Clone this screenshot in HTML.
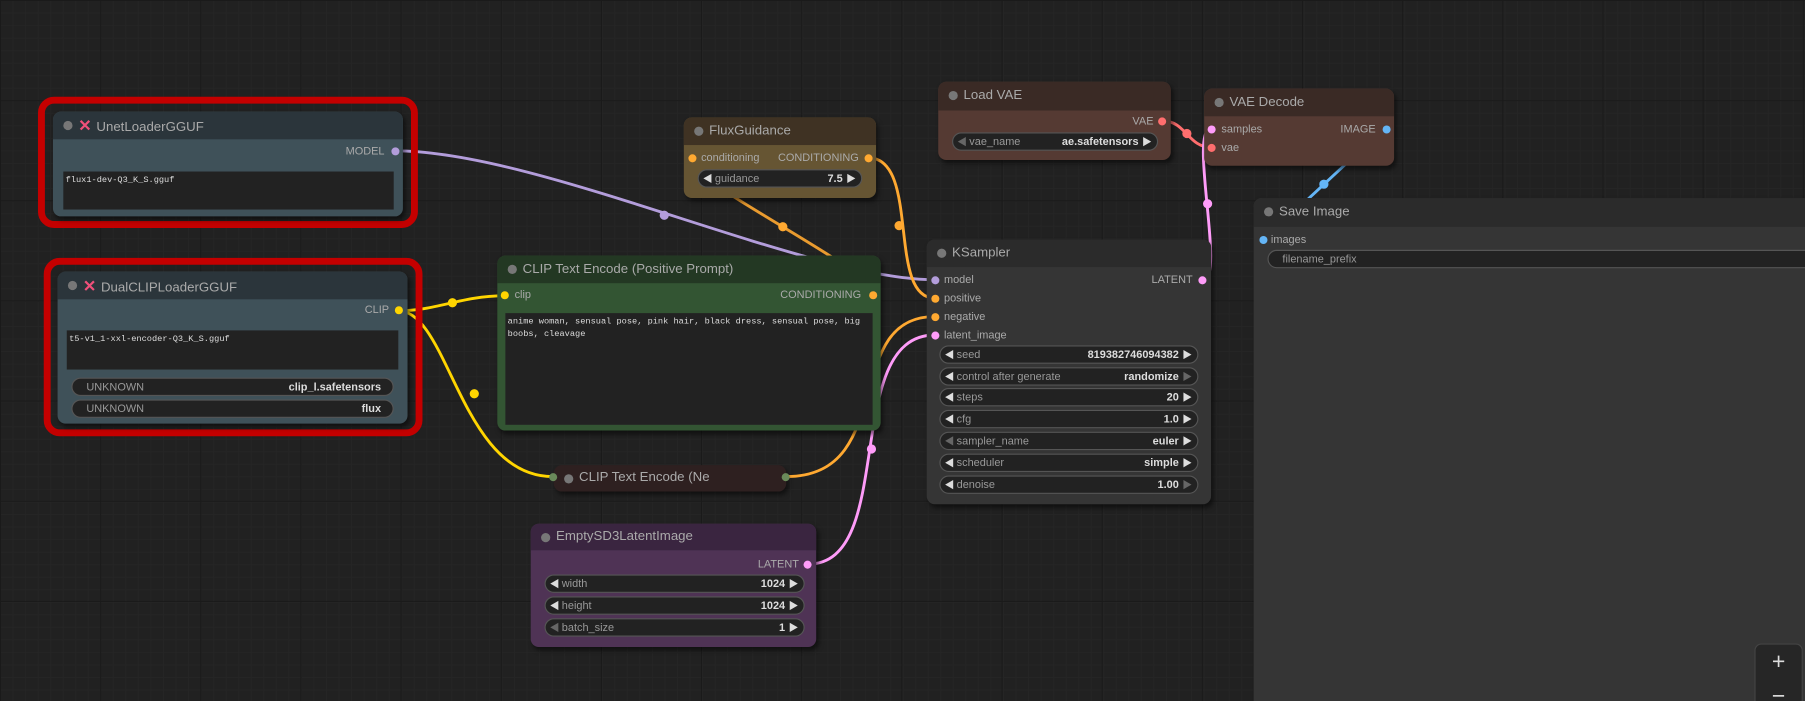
<!DOCTYPE html>
<html><head><meta charset="utf-8"><style>
html,body{margin:0;padding:0;width:1805px;height:701px;overflow:hidden;background:#202020}
#s{position:absolute;left:0;top:0;width:1568px;height:609px;transform:scale(1.1512);transform-origin:0 0;
background-color:#212121;
background-image:linear-gradient(#1a1a1a 1px,transparent 1px),linear-gradient(90deg,#1a1a1a 1px,transparent 1px),linear-gradient(#252525 1px,transparent 1px),linear-gradient(90deg,#252525 1px,transparent 1px);
background-size:87px 87px,87px 87px,10.9px 10.9px,10.9px 10.9px;
font-family:"Liberation Sans",sans-serif;color:#aaa;overflow:hidden}
.n{position:absolute;border-radius:7px;overflow:hidden;box-shadow:2px 3px 4px rgba(0,0,0,.5)}
.t{position:absolute;left:0;right:0;top:0;height:24px;font-size:11.5px;line-height:24px;color:#aaa;padding-left:22px;white-space:nowrap}
.t:before{content:"";position:absolute;left:9px;top:8px;width:8px;height:8px;border-radius:50%;background:#777}
.b{position:absolute;left:0;right:0;top:24px;bottom:0}
.l{position:absolute;font-size:9.5px;color:#aaa;white-space:nowrap}
.d{position:absolute;width:7px;height:7px;border-radius:50%}
.w{position:absolute;height:14px;border:1px solid #555;border-radius:8px;background:#222;font-size:9.5px;line-height:15px;color:#999}
.w .k{position:absolute;left:14px}
.w .v{position:absolute;right:16px;color:#ddd;font-weight:bold}
.w:before{content:"";position:absolute;left:4px;top:3px;border-style:solid;border-width:4px 7px 4px 0;border-color:transparent #ddd transparent transparent}
.w:after{content:"";position:absolute;right:5px;top:3px;border-style:solid;border-width:4px 0 4px 7px;border-color:transparent transparent transparent #ddd}
.w.u:before,.w.u:after{display:none}
.w.u .k{left:12px}.w.u .v{right:10px}
.w.dl:before{border-right-color:#666}.w.dr:after{border-left-color:#666}
.ta{position:absolute;background:#222;font-family:"Liberation Mono",monospace;font-size:7.5px;color:#ddd;padding:3px 2px;line-height:11px;box-sizing:border-box}
.red{position:absolute;border:6px solid #c40000;border-radius:14px;box-sizing:border-box}
.x{color:#f0507a;font-size:14px;margin-right:4px;font-weight:bold}
</style></head><body><div id="s">
<svg width="1568" height="609" style="position:absolute;left:0;top:0" fill="none" stroke-width="2.5">
<path d="M343 131 C470 131 700 243 812 243" stroke="#b39ddb"/><circle cx="577" cy="187" r="4" fill="#b39ddb"/>
<path d="M346 270 C380 270 400 257 438 257" stroke="#ffd500"/><circle cx="393" cy="263" r="4" fill="#ffd500"/>
<path d="M346 270 C390 270 400 414 480 414" stroke="#ffd500"/><circle cx="412" cy="342" r="4" fill="#ffd500"/>
<path d="M754 137 C800 137 770 259 812 259" stroke="#ffa931"/><circle cx="781" cy="196" r="4" fill="#ffa931"/>
<path d="M758 257 C800 257 560 137 601 137" stroke="#ffa931" opacity=".9"/><circle cx="680" cy="197" r="4" fill="#ffa931"/>
<path d="M683 414 C780 414 730 275 812 275" stroke="#ffa931"/><circle cx="751" cy="345" r="4" fill="#ffa931"/>
<path d="M702 490 C780 490 730 291 812 291" stroke="#ff9cf9"/><circle cx="757" cy="390" r="4" fill="#ff9cf9"/>
<path d="M1010 105 C1030 105 1032 128 1052 128" stroke="#ff6e6e"/><circle cx="1031" cy="116" r="4" fill="#ff6e6e"/>
<path d="M1045 243 C1065 243 1032 112 1052 112" stroke="#ff9cf9"/><circle cx="1049" cy="177" r="4" fill="#ff9cf9"/>
<path d="M1204 112 C1180 130 1120 190 1097 208" stroke="#64b5f6"/><circle cx="1150" cy="160" r="4" fill="#64b5f6"/>
</svg>

<div class="red" style="left:33px;top:84px;width:330px;height:114px"></div>
<div class="n" style="left:46px;top:97px;width:304px;height:91px;background:#3f5159">
<div class="t" style="background:#2b353b"><span class="x">✕</span>UnetLoaderGGUF</div>
<div class="b"><span class="l" style="right:16px;top:5px">MODEL</span><span class="d" style="right:3px;top:7px;background:#b39ddb"></span>
<div class="ta" style="left:9px;top:28px;width:287px;height:33px">flux1-dev-Q3_K_S.gguf</div></div></div>

<div class="red" style="left:38px;top:224px;width:329px;height:155px"></div>
<div class="n" style="left:50px;top:236px;width:304px;height:132px;background:#3f5159">
<div class="t" style="background:#2b353b"><span class="x">✕</span>DualCLIPLoaderGGUF</div>
<div class="b"><span class="l" style="right:16px;top:4px">CLIP</span><span class="d" style="right:4px;top:6px;background:#ffd500"></span>
<div class="ta" style="left:8px;top:27px;width:288px;height:34px">t5-v1_1-xxl-encoder-Q3_K_S.gguf</div>
<div class="w u" style="left:12px;top:68px;width:278px"><span class="k">UNKNOWN</span><span class="v">clip_l.safetensors</span></div>
<div class="w u" style="left:12px;top:87px;width:278px"><span class="k">UNKNOWN</span><span class="v">flux</span></div></div></div>

<div class="n" style="left:594px;top:102px;width:167px;height:70px;background:#665533">
<div class="t" style="background:#3f3223">FluxGuidance</div>
<div class="b"><span class="d" style="left:4px;top:8px;background:#ffa931"></span><span class="l" style="left:15px;top:6px">conditioning</span>
<span class="l" style="right:15px;top:6px">CONDITIONING</span><span class="d" style="right:3px;top:8px;background:#ffa931"></span>
<div class="w" style="left:12px;top:21px;width:141px"><span class="k">guidance</span><span class="v">7.5</span></div></div></div>

<div class="n" style="left:432px;top:222px;width:333px;height:152px;background:#335533">
<div class="t" style="background:#233823">CLIP Text Encode (Positive Prompt)</div>
<div class="b"><span class="d" style="left:3px;top:7px;background:#ffd500"></span><span class="l" style="left:15px;top:5px">clip</span>
<span class="l" style="right:17px;top:5px">CONDITIONING</span><span class="d" style="right:3px;top:7px;background:#ffa931"></span>
<div class="ta" style="left:7px;top:26px;width:319px;height:97px">anime woman, sensual pose, pink hair, black dress, sensual pose, big boobs, cleavage</div></div></div>

<div class="n" style="left:481px;top:404px;width:202px;height:23px;background:#2e2020">
<div class="t" style="height:23px;line-height:23px">CLIP Text Encode (Ne</div></div>
<span class="d" style="position:absolute;left:477px;top:411px;background:#6a8a5a"></span>
<span class="d" style="position:absolute;left:679px;top:411px;background:#6a8a5a"></span>

<div class="n" style="left:461px;top:455px;width:248px;height:107px;background:#4f3355">
<div class="t" style="background:#3a2540;height:23px;line-height:23px">EmptySD3LatentImage</div>
<div class="b" style="top:23px"><span class="l" style="right:15px;top:7px">LATENT</span><span class="d" style="right:4px;top:9px;background:#ff9cf9"></span>
<div class="w" style="left:12px;top:21px;width:224px"><span class="k">width</span><span class="v">1024</span></div>
<div class="w" style="left:12px;top:40px;width:224px"><span class="k">height</span><span class="v">1024</span></div>
<div class="w dl" style="left:12px;top:59px;width:224px"><span class="k">batch_size</span><span class="v">1</span></div></div></div>

<div class="n" style="left:815px;top:71px;width:202px;height:68px;background:#553a33">
<div class="t" style="background:#3a2a25;height:25px">Load VAE</div>
<div class="b" style="top:25px"><span class="l" style="right:15px;top:4px">VAE</span><span class="d" style="right:4px;top:6px;background:#ff6e6e"></span>
<div class="w dl" style="left:12px;top:19px;width:177px"><span class="k">vae_name</span><span class="v">ae.safetensors</span></div></div></div>

<div class="n" style="left:1046px;top:77px;width:165px;height:67px;background:#553a33">
<div class="t" style="background:#3a2a25">VAE Decode</div>
<div class="b"><span class="d" style="left:3px;top:8px;background:#ff9cf9"></span><span class="l" style="left:15px;top:6px">samples</span>
<span class="l" style="right:16px;top:6px">IMAGE</span><span class="d" style="right:3px;top:8px;background:#64b5f6"></span>
<span class="d" style="left:3px;top:24px;background:#ff6e6e"></span><span class="l" style="left:15px;top:22px">vae</span></div></div>

<div class="n" style="left:805px;top:208px;width:247px;height:230px;background:#353535">
<div class="t" style="background:#2b2b2b">KSampler</div>
<div class="b"><span class="d" style="left:4px;top:8px;background:#b39ddb"></span><span class="l" style="left:15px;top:6px">model</span>
<span class="l" style="right:16px;top:6px">LATENT</span><span class="d" style="right:4px;top:8px;background:#ff9cf9"></span>
<span class="d" style="left:4px;top:24px;background:#ffa931"></span><span class="l" style="left:15px;top:22px">positive</span>
<span class="d" style="left:4px;top:40px;background:#ffa931"></span><span class="l" style="left:15px;top:38px">negative</span>
<span class="d" style="left:4px;top:56px;background:#ff9cf9"></span><span class="l" style="left:15px;top:54px">latent_image</span>
<div class="w" style="left:11px;top:68px;width:223px"><span class="k">seed</span><span class="v">819382746094382</span></div>
<div class="w dr" style="left:11px;top:87px;width:223px"><span class="k">control after generate</span><span class="v">randomize</span></div>
<div class="w" style="left:11px;top:105px;width:223px"><span class="k">steps</span><span class="v">20</span></div>
<div class="w" style="left:11px;top:124px;width:223px"><span class="k">cfg</span><span class="v">1.0</span></div>
<div class="w dl" style="left:11px;top:143px;width:223px"><span class="k">sampler_name</span><span class="v">euler</span></div>
<div class="w" style="left:11px;top:162px;width:223px"><span class="k">scheduler</span><span class="v">simple</span></div>
<div class="w dr" style="left:11px;top:181px;width:223px"><span class="k">denoise</span><span class="v">1.00</span></div></div></div>

<div class="n" style="left:1089px;top:172px;width:500px;height:450px;background:#353535;border-radius:7px 0 0 0">
<div class="t" style="background:#2b2b2b;height:25px;line-height:25px">Save Image</div>
<div class="b" style="top:25px"><span class="d" style="left:5px;top:8px;background:#64b5f6"></span><span class="l" style="left:15px;top:6px">images</span>
<div class="w u" style="left:12px;top:20px;width:500px"><span class="k">filename_prefix</span></div></div></div>

<div style="position:absolute;left:1524px;top:559px;width:40px;height:60px;background:#262626;border:1px solid #444;border-radius:6px;color:#ddd;font-size:20px;text-align:center;line-height:30px">+<br>−</div>
</div></body></html>
